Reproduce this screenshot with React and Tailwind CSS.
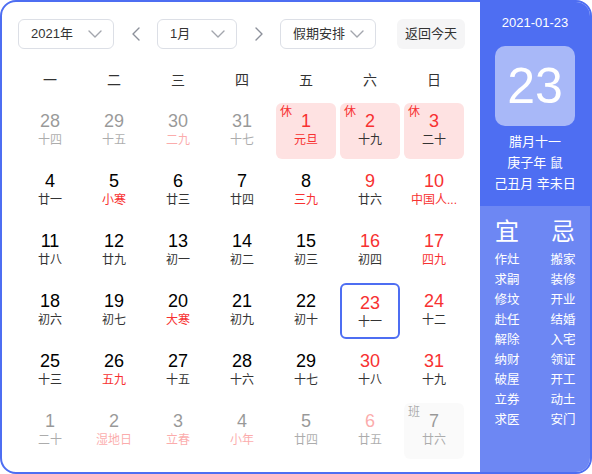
import React from "react";

const FONT = { fontFamily: '"Liberation Sans", "Noto Sans CJK SC", sans-serif' };

const Chevron = () => (
  <svg width="14" height="8" viewBox="0 0 14 8" fill="none">
    <path d="M1 1 L7 7 L13 1" stroke="#a3a6ad" strokeWidth="1.4" strokeLinecap="round" strokeLinejoin="round" />
  </svg>
);

const Arrow = ({ dir }) => (
  <svg width="8" height="14" viewBox="0 0 8 14" fill="none">
    <path
      d={dir === "left" ? "M7 1 L1 7 L7 13" : "M1 1 L7 7 L1 13"}
      stroke="#8c909a"
      strokeWidth="1.4"
      strokeLinecap="round"
      strokeLinejoin="round"
    />
  </svg>
);

const Select = ({ label, w }) => (
  <div
    className={`${w} h-[30px] flex items-center justify-between pl-[12px] pr-[11px] border border-[#dcdfe6] rounded-[6px] text-[13px] text-[#333] bg-white`}
  >
    <span>{label}</span>
    <Chevron />
  </div>
);

// d: digit, l: lunar, o: other month, rd: red digit, rl: red lunar, h: holiday tag, b: work tag, s: selected
const rows = [
  [
    { d: 28, l: "十四", o: 1 },
    { d: 29, l: "十五", o: 1 },
    { d: 30, l: "二九", o: 1, rl: 1 },
    { d: 31, l: "十七", o: 1 },
    { d: 1, l: "元旦", rd: 1, rl: 1, h: 1 },
    { d: 2, l: "十九", rd: 1, h: 1 },
    { d: 3, l: "二十", rd: 1, h: 1 },
  ],
  [
    { d: 4, l: "廿一" },
    { d: 5, l: "小寒", rl: 1 },
    { d: 6, l: "廿三" },
    { d: 7, l: "廿四" },
    { d: 8, l: "三九", rl: 1 },
    { d: 9, l: "廿六", rd: 1 },
    { d: 10, l: "中国人...", rd: 1, rl: 1 },
  ],
  [
    { d: 11, l: "廿八" },
    { d: 12, l: "廿九" },
    { d: 13, l: "初一" },
    { d: 14, l: "初二" },
    { d: 15, l: "初三" },
    { d: 16, l: "初四", rd: 1 },
    { d: 17, l: "四九", rd: 1, rl: 1 },
  ],
  [
    { d: 18, l: "初六" },
    { d: 19, l: "初七" },
    { d: 20, l: "大寒", rl: 1 },
    { d: 21, l: "初九" },
    { d: 22, l: "初十" },
    { d: 23, l: "十一", rd: 1, s: 1 },
    { d: 24, l: "十二", rd: 1 },
  ],
  [
    { d: 25, l: "十三" },
    { d: 26, l: "五九", rl: 1 },
    { d: 27, l: "十五" },
    { d: 28, l: "十六" },
    { d: 29, l: "十七" },
    { d: 30, l: "十八", rd: 1 },
    { d: 31, l: "十九", rd: 1 },
  ],
  [
    { d: 1, l: "二十", o: 1 },
    { d: 2, l: "湿地日", o: 1, rl: 1 },
    { d: 3, l: "立春", o: 1, rl: 1 },
    { d: 4, l: "小年", o: 1, rl: 1 },
    { d: 5, l: "廿四", o: 1 },
    { d: 6, l: "廿五", o: 1, rd: 1 },
    { d: 7, l: "廿六", o: 1, b: 1 },
  ],
];

const Cell = ({ c }) => {
  let cls = "relative h-[56px] rounded-[6px] flex flex-col items-center pt-[8px]";
  if (c.h) cls += " bg-[#fee2e2]";
  if (c.b) cls += " bg-[#f5f5f5]";
  if (c.s) cls += " border-2 border-[#4e6ef2] pt-[6px]";
  if (c.o) cls += " opacity-[0.4]";
  return (
    <div className={cls}>
      {c.h ? (
        <span className="absolute left-[4px] top-[1px] text-[12px] leading-[16px] text-[#f73131]">休</span>
      ) : null}
      {c.b ? (
        <span className="absolute left-[4px] top-[1px] text-[12px] leading-[16px] text-[#333]">班</span>
      ) : null}
      <span className={`text-[18px] leading-[20px] ${c.rd ? "text-[#f73131]" : "text-[#000]"}`}>{c.d}</span>
      <span className={`text-[12px] leading-[18px] whitespace-nowrap ${c.rl ? "text-[#f73131]" : "text-[#333]"}`}>
        {c.l}
      </span>
    </div>
  );
};

const yi = ["作灶", "求嗣", "修坟", "赴任", "解除", "纳财", "破屋", "立券", "求医"];
const ji = ["搬家", "装修", "开业", "结婚", "入宅", "领证", "开工", "动土", "安门"];

export default function App() {
  return (
    <div className="w-[592px] h-[474px] bg-white" style={FONT}>
      <div className="w-full h-full border-2 border-[#4e6ef2] rounded-[16px] overflow-hidden flex">
        {/* left calendar */}
        <div className="flex-1 flex flex-col pt-[17px] pl-[16px]">
          <div className="flex items-center">
            <Select label="2021年" w="w-[96px]" />
            <div className="w-[43px] flex justify-center">
              <Arrow dir="left" />
            </div>
            <Select label="1月" w="w-[80px]" />
            <div className="w-[43px] flex justify-center">
              <Arrow dir="right" />
            </div>
            <Select label="假期安排" w="w-[96px]" />
            <div className="ml-[21px] w-[68px] h-[30px] rounded-[6px] bg-[#f5f5f6] flex items-center justify-center text-[13px] text-[#333]">
              返回今天
            </div>
          </div>
          <div className="ml-[2px] mt-[16px] w-[444px] grid grid-cols-7 gap-x-[4px] h-[30px] items-center">
            {["一", "二", "三", "四", "五", "六", "日"].map((w) => (
              <div key={w} className="text-center text-[14px] text-[#333]">
                {w}
              </div>
            ))}
          </div>
          <div className="ml-[2px] mt-[8px] w-[444px] grid grid-cols-7 gap-x-[4px] gap-y-[4px]">
            {rows.flat().map((c, i) => (
              <Cell key={i} c={c} />
            ))}
          </div>
        </div>
        {/* right panel */}
        <div className="w-[110px] flex flex-col">
          <div className="bg-[#4e6ef2] flex flex-col items-center pt-[11px] pb-[12px] text-white">
            <div className="text-[13px] leading-[20px]">2021-01-23</div>
            <div className="mt-[13px] w-[80px] h-[80px] rounded-[10px] bg-[#a8b8f8] flex items-center justify-center text-[50px] leading-none text-white">
              23
            </div>
            <div className="mt-[5px] text-[13px] leading-[21px]">腊月十一</div>
            <div className="text-[13px] leading-[21px]">庚子年 鼠</div>
            <div className="text-[13px] leading-[21px]">己丑月 辛未日</div>
          </div>
          <div className="flex-1 bg-[#6d87f3] flex justify-center gap-x-[30px] pt-[12px] text-white">
            <div className="flex flex-col items-center w-[26px]">
              <div className="text-[24px] leading-[28px]">宜</div>
              <div className="mt-[4px] flex flex-col items-center">
                {yi.map((t) => (
                  <div key={t} className="text-[12.5px] leading-[20px] whitespace-nowrap">
                    {t}
                  </div>
                ))}
              </div>
            </div>
            <div className="flex flex-col items-center w-[26px]">
              <div className="text-[24px] leading-[28px]">忌</div>
              <div className="mt-[4px] flex flex-col items-center">
                {ji.map((t) => (
                  <div key={t} className="text-[12.5px] leading-[20px] whitespace-nowrap">
                    {t}
                  </div>
                ))}
              </div>
            </div>
          </div>
        </div>
      </div>
    </div>
  );
}
